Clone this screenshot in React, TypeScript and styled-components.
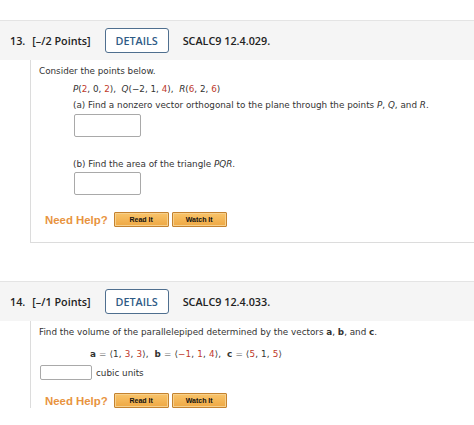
import styled, { createGlobalStyle } from 'styled-components';

const GlobalStyle = createGlobalStyle`
  html, body {
    margin: 0;
    padding: 0;
    background: #fff;
  }
  body {
    font-family: 'DejaVu Sans', Verdana, sans-serif;
    color: #222;
  }
`;

const Page = styled.div`
  padding-top: 20px;
  width: 474px;
  overflow: hidden;
`;

const Question = styled.section<{ $gap?: number }>`
  margin-bottom: ${(p) => p.$gap ?? 0}px;
`;

const Header = styled.div`
  display: flex;
  align-items: center;
  height: 39px;
  padding-left: 10px;
  background: #f5f5f5;
  border-top: 1px solid #e4e4e4;
  font-family: 'Open Sans', sans-serif;
  font-weight: 600;
  font-size: 10.8px;
  color: #222;
`;

const Num = styled.span`
  margin-right: 7px;
`;

const Points = styled.span`
  margin-right: 14px;
`;

const DetailsButton = styled.button`
  width: 64px;
  height: 25px;
  border: 1.5px solid #4f6f8f;
  border-radius: 3px;
  background: #fff;
  color: #2f5b86;
  font-family: 'Open Sans', sans-serif;
  font-weight: 600;
  font-size: 10.8px;
  margin-right: 14px;
  padding: 0;
`;

// panel with the grey left rule
const Panel = styled.div<{ $open?: boolean }>`
  margin-left: 30px;
  border-left: 1px solid #dcdcdc;
  border-bottom: ${(p) => (p.$open ? 'none' : '1px solid #dcdcdc')};
  padding: 5px 0 0 8px;
  font-size: 8.8px;
  color: #333;
`;

const Line = styled.div<{ $indent?: number; $top?: number; $spaced?: boolean }>`
  line-height: 12px;
  padding-left: ${(p) => p.$indent ?? 0}px;
  margin-top: ${(p) => p.$top ?? 0}px;
  white-space: nowrap;
  letter-spacing: ${(p) => (p.$spaced ? '0.15px' : 'normal')};
`;

const Red = styled.span`
  color: #c0392b;
`;

const Muted = styled.span`
  color: #888;
`;

const AnswerBox = styled.div<{ $w: number; $h: number; $indent?: number; $top?: number }>`
  width: ${(p) => p.$w}px;
  height: ${(p) => p.$h}px;
  margin-left: ${(p) => p.$indent ?? 0}px;
  margin-top: ${(p) => p.$top ?? 0}px;
  border: 1px solid #a9a9a9;
  border-radius: 2px;
  background: #fff;
  box-sizing: border-box;
  flex-shrink: 0;
`;

const UnitRow = styled.div`
  display: flex;
  align-items: center;
  gap: 4px;
  margin-top: 5px;
`;

const HelpRow = styled.div<{ $top: number; $bottom: number }>`
  display: flex;
  align-items: center;
  margin: ${(p) => p.$top}px 0 ${(p) => p.$bottom}px 6px;
`;

const HelpLabel = styled.span`
  font-family: 'Liberation Sans', Arial, sans-serif;
  font-weight: bold;
  font-size: 11.4px;
  color: #e8943f;
  margin-right: 6px;
`;

const HelpButton = styled.button`
  width: 55px;
  height: 15px;
  margin-right: 3px;
  padding: 0;
  border: 1px solid #c4822f;
  border-radius: 1px;
  background: linear-gradient(#f9c46a, #eea844);
  box-shadow: inset 0 0 0 1px #f6d08c;
  font-family: 'Liberation Sans', Arial, sans-serif;
  font-weight: bold;
  font-size: 7px;
  color: #111;
`;

const QHeader = ({ num, pts, code }: { num: string; pts: string; code: string }) => (
  <Header>
    <Num>{num}</Num>
    <Points>{pts}</Points>
    <DetailsButton>DETAILS</DetailsButton>
    <span>{code}</span>
  </Header>
);

const Help = ({ top, bottom }: { top: number; bottom: number }) => (
  <HelpRow $top={top} $bottom={bottom}>
    <HelpLabel>Need Help?</HelpLabel>
    <HelpButton>Read It</HelpButton>
    <HelpButton>Watch It</HelpButton>
  </HelpRow>
);

export default function App() {
  return (
    <Page>
      <GlobalStyle />
      <Question $gap={38}>
        <QHeader num="13." pts="[–/2 Points]" code="SCALC9 12.4.029." />
        <Panel>
          <Line>Consider the points below.</Line>
          <Line $indent={34} $top={6}>
            <i>P</i>(<Red>2</Red>, 0, <Red>2</Red>),&nbsp; <i>Q</i>(−2, 1, <Red>4</Red>),&nbsp;{' '}
            <i>R</i>(<Red>6</Red>, 2, <Red>6</Red>)
          </Line>
          <Line $indent={34} $top={4}>
            (a) Find a nonzero vector orthogonal to the plane through the points <i>P</i>, <i>Q</i>, and{' '}
            <i>R</i>.
          </Line>
          <AnswerBox $w={67} $h={23} $indent={35} $top={3} />
          <Line $indent={34} $top={21}>
            (b) Find the area of the triangle <i>PQR</i>.
          </Line>
          <AnswerBox $w={67} $h={23} $indent={35} $top={2} />
          <Help top={17} bottom={15} />
        </Panel>
      </Question>
      <Question>
        <QHeader num="14." pts="[–/1 Points]" code="SCALC9 12.4.033." />
        <Panel $open>
          <Line>
            Find the volume of the parallelepiped determined by the vectors <b>a</b>, <b>b</b>, and <b>c</b>.
          </Line>
          <Line $indent={51} $top={10} $spaced>
            <b>a</b> <Muted>=</Muted> ⟨1, <Red>3</Red>, <Red>3</Red>⟩,&nbsp; <b>b</b> <Muted>=</Muted> ⟨
            <Red>−1</Red>, <Red>1</Red>, <Red>4</Red>⟩,&nbsp; <b>c</b> <Muted>=</Muted> ⟨<Red>5</Red>, 1,{' '}
            <Red>5</Red>⟩
          </Line>
          <UnitRow>
            <AnswerBox $w={52} $h={15} $indent={1} />
            <span>cubic units</span>
          </UnitRow>
          <Help top={13} bottom={20} />
        </Panel>
      </Question>
    </Page>
  );
}
